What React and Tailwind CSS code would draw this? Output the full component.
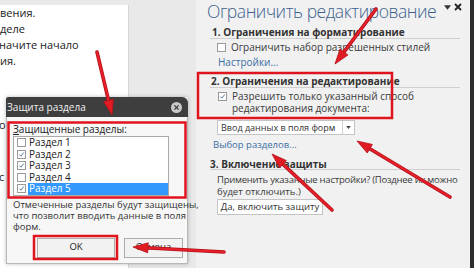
import React from "react";

function Arrow({ x1, y1, x2, y2 }) {
  const dx = x2 - x1;
  const dy = y2 - y1;
  const len = Math.sqrt(dx * dx + dy * dy);
  const ux = dx / len;
  const uy = dy / len;
  const hl = 15;
  const hw = 5;
  const bx = x2 - ux * hl;
  const by = y2 - uy * hl;
  const p1 = `${x2},${y2}`;
  const p2 = `${bx - uy * hw},${by + ux * hw}`;
  const p3 = `${bx + uy * hw},${by - ux * hw}`;
  return (
    <g>
      <line x1={x1} y1={y1} x2={bx + ux * 2} y2={by + uy * 2} stroke="#b5111a" strokeWidth="3.6" strokeLinecap="round" />
      <line x1={x1} y1={y1} x2={bx + ux * 2} y2={by + uy * 2} stroke="#e8202a" strokeWidth="2" strokeLinecap="round" />
      <polygon points={`${p1} ${p2} ${p3}`} fill="#e01b24" stroke="#b5111a" strokeWidth="0.8" />
    </g>
  );
}

function Check({ className }) {
  return (
    <svg viewBox="0 0 10 10" className={className}>
      <path d="M2 5.2 L4.2 7.4 L8.2 2.2" fill="none" stroke="#4a6f95" strokeWidth="1.3" />
    </svg>
  );
}

function Box({ checked }) {
  return (
    <div className="w-[9px] h-[9px] border border-[#9a9a9a] bg-white flex items-center justify-center shrink-0">
      {checked ? <Check className="w-[9px] h-[9px]" /> : null}
    </div>
  );
}

export default function App() {
  const items = ["Раздел 1", "Раздел 2", "Раздел 3", "Раздел 4", "Раздел 5"];
  const checked = [false, true, true, false, true];
  return (
    <div
      className="relative w-[474px] h-[268px] overflow-hidden flex bg-[#e9e9e9] text-[#333]"
      style={{ fontFamily: '"Open Sans", "Noto Sans", sans-serif' }}
    >
      {/* document area */}
      <div className="w-[196px] pt-[5px] flex shrink-0">
        <div className="w-[129px] bg-white border-r border-[#d6d6d6] text-[11px] leading-[16px] text-[#222] flex flex-col">
          <div>вения.</div>
          <div>деле</div>
          <div className="-ml-[1px]">начите начало</div>
          <div>ия.</div>
          <div className="mt-[48px] w-[6px] -ml-[1px]">о</div>
          <div className="mt-[36px] w-[6px] -ml-[1px]">с</div>
        </div>
      </div>

      {/* task pane */}
      <div className="w-[274px] shrink-0 bg-[#f1f1f1] pl-[14px] pr-[10px] flex flex-col text-[10px] text-[#3a3a3a]">
        <div className="h-[22px] flex items-start -ml-[3px]">
          <span className="w-[232px] shrink-0 text-[17.5px] leading-[22px] font-light tracking-[-0.45px] text-[#3d6190] whitespace-nowrap overflow-hidden">
            Ограничить редактирование
          </span>
          <div className="ml-[5px] mt-[4px] w-[8px] h-[6px] flex items-center justify-center">
            <svg viewBox="0 0 8 5" width="7" height="5"><path d="M0 0 L8 0 L4 5 Z" fill="#333" /></svg>
          </div>
          <div className="ml-[3px] mt-[3px] w-[8px] h-[8px] flex items-center justify-center">
            <svg viewBox="0 0 8 8" width="8" height="8"><path d="M1 1 L7 7 M7 1 L1 7" stroke="#222" strokeWidth="1.8" /></svg>
          </div>
        </div>

        <div className="mt-[5px] h-[12px] flex items-center border-b border-[#cfcfcf] font-bold text-[10px] text-[#333] whitespace-nowrap">
          <span className="ml-[2px]">1. Ограничения на форматирование</span>
        </div>
        <div className="mt-[2px] h-[12px] flex items-center pl-[7px] gap-[5px]">
          <Box />
          <span className="whitespace-nowrap">Ограничить набор разрешенных стилей</span>
        </div>
        <div className="mt-[4px] h-[11px] flex items-center pl-[8px] text-[#3a6ea5]">Настройки...</div>

        <div className="mt-[8px] h-[12px] flex items-center border-b border-[#cfcfcf] font-bold text-[10px] text-[#333] whitespace-nowrap">
          <span className="ml-[1px]">2. Ограничения на редактирование</span>
        </div>
        <div className="mt-[2px] flex items-start pl-[8px] gap-[5px] leading-[12px]">
          <div className="mt-[1.5px]"><Box checked /></div>
          <div>
            <div className="whitespace-nowrap">Разрешить только указанный способ</div>
            <div className="whitespace-nowrap">редактирования документа:</div>
          </div>
        </div>
        <div className="mt-[6px] ml-[7px] w-[138px] h-[15px] bg-white border border-[#c4c4c4] flex">
          <div className="flex-1 pl-[3px] flex items-center whitespace-nowrap text-[9px] text-[#333]">Ввод данных в поля форм</div>
          <div className="w-[12px] border-l border-[#d0d0d0] flex items-center justify-center">
            <svg viewBox="0 0 6 4" className="w-[5px] h-[3px]"><path d="M0 0 L6 0 L3 4 Z" fill="#444" /></svg>
          </div>
        </div>
        <div className="mt-[5px] h-[11px] flex items-center pl-[3px] text-[9.5px] text-[#3a6ea5]">Выбор разделов...</div>

        <div className="mt-[8px] h-[11px] flex items-center border-b border-[#cfcfcf] font-bold text-[10px] text-[#333] whitespace-nowrap">
          3. Включение защиты
        </div>
        <div className="mt-[4px] pl-[7px] leading-[11.5px] text-[9.5px]">
          <div className="whitespace-nowrap tracking-[-0.25px]">Применить указанные настройки? (Позднее их можно</div>
          <div className="whitespace-nowrap">будет отключить.)</div>
        </div>
        <div className="mt-[2px] ml-[7px] w-[106px] h-[16px] bg-white border border-[#c4c4c4] flex items-center justify-center text-[9.5px] text-[#333] whitespace-nowrap">
          Да, включить защиту
        </div>
      </div>

      <div className="w-[4px] shrink-0 bg-[#2e2e2e]" />

      {/* dialog */}
      <div className="absolute left-[6px] top-[97px] w-[182px] h-[167px] flex flex-col shadow-[0_0_4px_rgba(0,0,0,0.25)]">
        <div className="h-[20px] bg-[#3e3e3e] rounded-tr-[6px] rounded-tl-[2px] flex items-center justify-between pl-[1px] pr-[6px]">
          <span className="text-[10px] text-[#f0f0f0]">Защита раздела</span>
          <div className="w-[11px] h-[11px] rounded-full bg-[#c9c9c9] flex items-center justify-center">
            <svg viewBox="0 0 10 10" className="w-[7px] h-[7px]">
              <path d="M2 2 L8 8 M8 2 L2 8" stroke="#3a3a3a" strokeWidth="1.8" />
            </svg>
          </div>
        </div>
        <div className="flex-1 bg-[#f7f7f7] border border-t-0 border-[#b8b8b8] pl-[6px] pt-[7px] text-[10px] text-[#222]">
          <div className="h-[11px] flex items-center whitespace-nowrap">
            <span className="underline">З</span>ащищенные разделы:
          </div>
          <div className="mt-[1px] w-[156px] bg-white border border-[#a9a9a9] flex flex-col">
            {items.map((it, i) => (
              <div key={it} className="h-[11.5px] leading-[11.5px] flex items-center">
                <div className="w-[14px] flex items-center justify-center">
                  <Box checked={checked[i]} />
                </div>
                <div
                  className={
                    i === 4
                      ? "flex-1 h-full bg-[#3399ff] text-white pl-[1px] flex items-center"
                      : "flex-1 pl-[1px] flex items-center"
                  }
                >
                  {it}
                </div>
              </div>
            ))}
          </div>
          <div className="mt-[3px] leading-[11px] text-[9.5px] text-[#333]">
            <div className="whitespace-nowrap">Отмеченные разделы будут защищены,</div>
            <div className="whitespace-nowrap">что позволит вводить данные в поля</div>
            <div>форм.</div>
          </div>
          <div className="mt-[6px] flex gap-[9px] pl-[24px] text-[9.5px]">
            <div className="w-[78px] h-[20px] bg-[#f2f2f2] border border-[#adadad] flex items-center justify-center text-[#222]">OK</div>
            <div className="w-[59px] h-[20px] bg-[#f2f2f2] border border-[#adadad] flex items-center justify-center text-[#222]">Отмена</div>
          </div>
        </div>
      </div>

      {/* annotations */}
      <svg className="absolute left-0 top-0 w-[474px] h-[268px] pointer-events-none" viewBox="0 0 474 268">
        <rect x="198" y="73" width="194" height="45" fill="none" stroke="#e0141e" strokeWidth="2.5" />
        <rect x="8.5" y="122.5" width="177" height="75" fill="none" stroke="#e0141e" strokeWidth="2.5" />
        <rect x="34" y="236" width="83" height="23" fill="none" stroke="#e0141e" strokeWidth="2.5" />
        <Arrow x1={97} y1={52} x2={112} y2={115} />
        <Arrow x1={376} y1={9} x2={335} y2={64} />
        <Arrow x1={450} y1={197} x2={357} y2={141} />
        <Arrow x1={332} y1={210} x2={272} y2={154} />
        <Arrow x1={224} y1={252} x2={133} y2={247} />
      </svg>
    </div>
  );
}
